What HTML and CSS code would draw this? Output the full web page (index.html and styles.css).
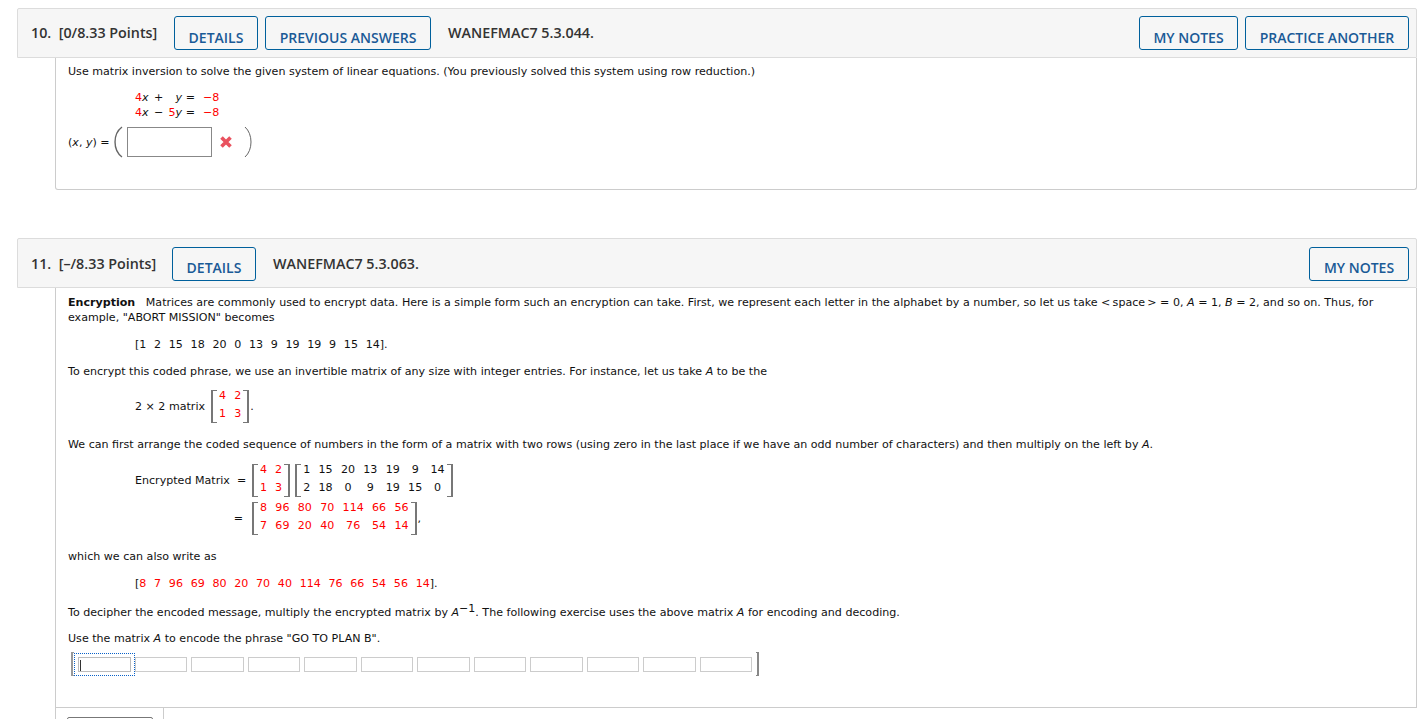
FILE: index.html
```html
<!DOCTYPE html>
<html lang="en">
<head>
<meta charset="utf-8">
<title>Questions</title>
<link rel="stylesheet" href="styles.css">
</head>
<body>
<section class="q q-ten">
  <header class="qhead">
    <div class="qtitle">10.&nbsp; [0/8.33 Points]</div>
    <a class="btn btn-a">DETAILS</a>
    <a class="btn btn-b">PREVIOUS ANSWERS</a>
    <div class="qref">WANEFMAC7 5.3.044.</div>
    <div class="spacer"></div>
    <a class="btn btn-c">MY NOTES</a>
    <a class="btn btn-d">PRACTICE ANOTHER</a>
  </header>
  <div class="qbody body-ten">
    <p class="p0">Use matrix inversion to solve the given system of linear equations. (You previously solved this system using row reduction.)</p>
    <div class="eqs">
      <div class="eq"><span class="c1"><b>4</b><i>x</i></span><span class="c2">+</span><span class="c3"><i>y</i></span><span class="c4">=</span><span class="c5"><b>−8</b></span></div>
      <div class="eq"><span class="c1"><b>4</b><i>x</i></span><span class="c2">−</span><span class="c3"><b>5</b><i>y</i></span><span class="c4">=</span><span class="c5"><b>−8</b></span></div>
    </div>
    <div class="answer">
      <span class="ans-lbl">(<i>x</i>, <i>y</i>) =</span>
      <svg class="paren" width="10" height="32" viewBox="0 0 10 32"><path d="M8 1C-1.3 8 -1.3 24 8 31" fill="none" stroke="#666" stroke-width="1.4"/></svg>
      <span class="box"></span>
      <svg class="cross" width="12" height="12" viewBox="0 0 12 12"><path d="M1.5 1.5l9 9M10.5 1.5l-9 9" fill="none" stroke="#e9525f" stroke-width="3.6"/></svg>
      <svg class="paren paren-r" width="10" height="32" viewBox="0 0 10 32"><path d="M2 1C10 8 10 24 2 31" fill="none" stroke="#666" stroke-width="1"/></svg>
    </div>
  </div>
</section>

<section class="q q-eleven">
  <header class="qhead">
    <div class="qtitle t2">11.&nbsp; [–/8.33 Points]</div>
    <a class="btn btn-a">DETAILS</a>
    <div class="qref r2">WANEFMAC7 5.3.063.</div>
    <div class="spacer"></div>
    <a class="btn btn-e">MY NOTES</a>
  </header>
  <div class="qbody body-eleven">
    <p class="p0"><strong>Encryption</strong>&nbsp;&nbsp; Matrices are commonly used to encrypt data. Here is a simple form such an encryption can take. First, we represent each letter in the alphabet by a number, so let us take &lt;&#8201;space&#8201;&gt; = 0, <i>A</i> = 1, <i>B</i> = 2, and so on. Thus, for example, "ABORT MISSION" becomes</p>
    <p class="ind seq1">[1&nbsp; 2&nbsp; 15&nbsp; 18&nbsp; 20&nbsp; 0&nbsp; 13&nbsp; 9&nbsp; 19&nbsp; 19&nbsp; 9&nbsp; 15&nbsp; 14].</p>
    <p class="p1">To encrypt this coded phrase, we use an invertible matrix of any size with integer entries. For instance, let us take <i>A</i> to be the</p>
    <div class="ind line m2x2">
      <span>2 × 2 matrix</span>
      <span class="mat red cols2"><span>4</span><span>2</span><span>1</span><span>3</span></span><span class="after">.</span>
    </div>
    <p class="p2">We can first arrange the coded sequence of numbers in the form of a matrix with two rows (using zero in the last place if we have an odd number of characters) and then multiply on the left by <i>A</i>.</p>
    <div class="ind line enc1">
      <span class="lbl">Encrypted Matrix&nbsp; =</span>
      <span class="mat red cols2"><span>4</span><span>2</span><span>1</span><span>3</span></span>
      <span class="mat cols7 m-b"><span>1</span><span>15</span><span>20</span><span>13</span><span>19</span><span>9</span><span>14</span><span>2</span><span>18</span><span>0</span><span>9</span><span>19</span><span>15</span><span>0</span></span>
    </div>
    <div class="ind line enc2">
      <span class="lbl lbl-r">=</span>
      <span class="mat red cols7"><span>8</span><span>96</span><span>80</span><span>70</span><span>114</span><span>66</span><span>56</span><span>7</span><span>69</span><span>20</span><span>40</span><span>76</span><span>54</span><span>14</span></span><span class="after">,</span>
    </div>
    <p class="p3">which we can also write as</p>
    <p class="ind seq2">[<span class="redt">8&nbsp; 7&nbsp; 96&nbsp; 69&nbsp; 80&nbsp; 20&nbsp; 70&nbsp; 40&nbsp; 114&nbsp; 76&nbsp; 66&nbsp; 54&nbsp; 56&nbsp; 14</span>].</p>
    <p class="p4">To decipher the encoded message, multiply the encrypted matrix by <i>A</i><sup>−1</sup>. The following exercise uses the above matrix <i>A</i> for encoding and decoding.</p>
    <p class="p5">Use the matrix <i>A</i> to encode the phrase "GO TO PLAN B".</p>
    <div class="inputs">
      <span class="br-l"></span>
      <span class="cell focus"><span class="caret"></span></span>
      <span class="cell"></span><span class="cell"></span><span class="cell"></span><span class="cell"></span><span class="cell"></span>
      <span class="cell"></span><span class="cell"></span><span class="cell"></span><span class="cell"></span><span class="cell"></span><span class="cell"></span>
      <span class="br-r"></span>
    </div>
  </div>
  <footer class="qfoot">
    <div class="footcell"><a class="submit"></a></div>
  </footer>
</section>
</body>
</html>
```
FILE: styles.css
```css
html, body { margin: 0; padding: 0; height: 719px; overflow: hidden; background: #fff; }
body { font-family: "DejaVu Sans", Verdana, sans-serif; font-size: 11.08px; line-height: 15px; color: #111; padding: 8px 7px 0 17px; box-sizing: border-box; }
p { margin: 0; }
.q-eleven { margin-top: 48px; }
.qhead { display: flex; align-items: flex-start; height: 50px; box-sizing: border-box; background: #f6f6f6; border: 1px solid #dcdcdc; border-radius: 2px 2px 0 0; font-family: "Open Sans", sans-serif; }
.qtitle { font-size: 14.3px; font-weight: 600; color: #333; line-height: 20px; margin: 14px 16px 0 13px; width: 127px; white-space: nowrap; }
.qtitle.t2 { width: 125px; margin-top: 15px; }
.qref { font-size: 14.3px; font-weight: 600; color: #333; line-height: 20px; margin: 14px 0 0 17px; white-space: nowrap; }
.qref.r2 { margin: 15px 0 0 10px; }
.spacer { flex: 1; }
.btn { box-sizing: border-box; display: block; height: 34px; margin-top: 7px; margin-right: 7px; border: 1px solid #00609c; border-radius: 3px; color: #1a5a96; font-size: 14px; font-weight: 600; line-height: 20px; padding-top: 11px; text-align: center; white-space: nowrap; }
.q-eleven .btn { margin-top: 8px; padding-top: 10px; }
.btn-a { width: 84px; }
.btn-b { width: 166px; margin-right: 0; }
.btn-c { width: 99px; }
.btn-d { width: 164px; margin-right: 7px; }
.btn-e { width: 100px; }
.qbody { margin-left: 38px; border-left: 1px solid #ccc; padding-left: 12px; }
.body-ten { height: 132px; box-sizing: border-box; border-right: 1px solid #ccc; border-bottom: 1px solid #ccc; border-radius: 0 0 3px 3px; padding-top: 6px; }
.body-eleven { height: 419px; box-sizing: border-box; border-right: 1px solid #ccc; padding-top: 7px; padding-right: 30px; }
.eqs { margin: 11px 0 0 67px; }
.eq { display: flex; height: 15px; }
.c1 { width: 19px; }
.c2 { width: 14px; }
.c3 { width: 14px; text-align: right; }
.c4 { width: 13px; text-align: right; }
.c5 { margin-left: 8px; }
b { font-weight: normal; color: #f00; }
.redt { color: #f00; }
.answer { display: flex; align-items: center; height: 32px; margin-top: 6px; }
.ans-lbl { width: 46px; white-space: nowrap; }
.box { width: 85px; height: 30px; box-sizing: border-box; border: 1px solid #888; background: #fff; margin-left: 3px; }
.cross { margin-left: 8px; }
.paren-r { margin-left: 11px; }
.ind { margin-left: 67px; }
.seq1 { margin-top: 12px; word-spacing: .33px; }
.p1 { margin-top: 12px; }
.line { display: flex; align-items: center; }
.m2x2 { margin-top: 11px; }
.m2x2 .mat { margin-left: 6px; }
.p2 { margin-top: 14px; }
.enc1 { margin-top: 12px; }
.enc2 { margin-top: 5px; }
.lbl { width: 113px; white-space: nowrap; }
.lbl-r { text-align: right; padding-right: 5px; width: 108px; }
.mat { display: inline-grid; grid-auto-rows: 12px; row-gap: 6px; align-items: center; justify-items: center; box-sizing: border-box; border-left: 2px solid #777; border-right: 2px solid #777; position: relative; padding: 0 6px; margin: 0 5px 0 4px; height: 33px; line-height: 12px; }
.mat::before, .mat::after { content: ""; position: absolute; top: 0; bottom: 0; width: 4px; border-top: 1px solid #777; border-bottom: 1px solid #777; }
.mat::before { left: 0; }
.mat::after { right: 0; }
.red { color: #f00; }
.cols2 { grid-template-columns: repeat(2, auto); column-gap: 8px; }
.cols7 { grid-template-columns: repeat(7, auto); column-gap: 8.3px; }
.m-b { margin-left: 0; }
.after { margin-left: -4px; }
.p3 { margin-top: 14px; }
.seq2 { margin-top: 12px; word-spacing: .33px; }
.p4 { margin-top: 14px; }
sup { font-size: 11px; line-height: 0; vertical-align: 4px; }
.p5 { margin-top: 11px; }
.inputs { display: flex; align-items: center; height: 26px; margin: 5px 0 0 3px; gap: 4px; }
.br-l { width: 3px; height: 24px; box-sizing: border-box; border-left: 2px solid #999; border-top: 1px solid #999; border-bottom: 1px solid #999; }
.br-r { width: 3px; height: 24px; box-sizing: border-box; border-right: 2px solid #888; border-top: 1px solid #888; border-bottom: 1px solid #888; }
.cell { display: block; width: 52.5px; height: 15px; box-sizing: border-box; border: 1px solid #ccc; background: #fff; position: relative; }
.focus { outline: 1px dotted #0a62c9; outline-offset: 3px; border-color: #bbb; }
.caret { position: absolute; left: 1px; top: 2px; width: 1px; height: 11px; background: #333; }
.qfoot { margin-left: 38px; border-left: 1px solid #ccc; border-top: 1px solid #ccc; height: 40px; }
.footcell { width: 108px; height: 40px; border-right: 1px solid #ccc; box-sizing: border-box; padding: 9px 0 0 11px; }
.submit { display: block; width: 86px; height: 30px; box-sizing: border-box; border: 1px solid #777; border-radius: 2px; }
```
